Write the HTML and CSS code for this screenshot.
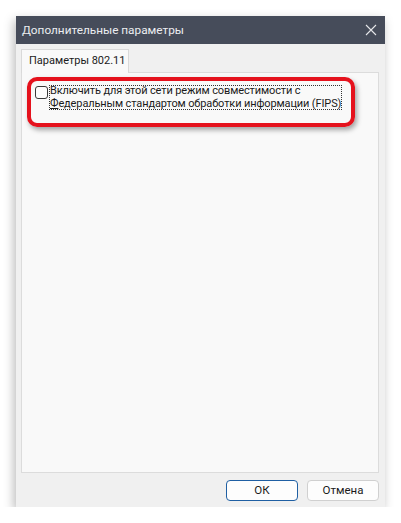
FILE: index.html
```html
<!DOCTYPE html>
<html lang="ru">
<head>
<meta charset="utf-8">
<link rel="stylesheet" href="styles.css">
</head>
<body>
<div class="window">
  <div class="titlebar">
    <span class="title">Дополнительные параметры</span>
    <svg class="close" width="12" height="12" viewBox="0 0 12 12"><path d="M1 1L11 11M11 1L1 11" stroke="#e6e7ea" stroke-width="1.1" fill="none"/></svg>
  </div>
  <div class="body">
    <div class="tabs"><div class="tab">Параметры 802.11</div></div>
    <div class="panel">
      <div class="highlight">
        <div class="row">
          <span class="check"></span>
          <span class="label">Включить для этой сети режим совместимости с<br><u>Ф</u>едеральным стандартом обработки информации (FIPS)</span>
        </div>
      </div>
    </div>
  </div>
  <div class="footer">
    <button class="btn primary">ОК</button>
    <button class="btn">Отмена</button>
  </div>
</div>
</body>
</html>
```
FILE: styles.css
```css
html, body { margin: 0; padding: 0; background: #ffffff; }
body { font-family: Roboto, "Noto Sans", sans-serif; font-size: 11px; color: #1b1b1b; }
.window {
  margin: 16px 0 0 16px;
  width: 369px;
  height: 491px;
  background: #f0f0f0;
  display: flex;
  flex-direction: column;
  box-shadow: -2px 4px 10px rgba(0,0,0,0.28);
}
.titlebar {
  height: 28px;
  background: #464c5a;
  display: flex;
  align-items: center;
  justify-content: space-between;
  padding: 0 8px 0 6px;
}
.title { color: #eceef1; font-size: 11.8px; }
.body { flex: 1; display: flex; flex-direction: column; padding: 5px 6px 0 5px; }
.tabs { display: flex; height: 23px; }
.tab {
  background: #f9f9f9;
  border: 1px solid #d9d9d9;
  border-bottom: none;
  width: 108px;
  padding-left: 7px;
  box-sizing: border-box;
  line-height: 22px;
  font-size: 11px;
  white-space: nowrap;
  position: relative;
  z-index: 1;
  margin-bottom: -1px;
}
.panel {
  flex: 1;
  background: #f9f9f9;
  border: 1px solid #dcdcdc;
  padding: 4px 0 0 5px;
}
.highlight {
  width: 316px;
  height: 38px;
  border: 4px solid #e5121d;
  border-radius: 10px;
  box-shadow: 2px 3px 5px rgba(0,0,0,0.35);
  padding: 4px 0 0 4px;
}
.row { display: flex; align-items: flex-start; }
.check {
  width: 11px; height: 11px;
  border: 1px solid #3a3a3a;
  border-radius: 3px;
  background: #fdfdfd;
  margin-top: 1px;
  flex: none;
}
.label {
  margin-left: 1px;
  outline: 1px dotted #333;
  outline-offset: -1px;
  padding: 0 2px 0 1px;
  font-size: 11px;
  letter-spacing: -0.12px;
  line-height: 12.5px;
  width: 290px;
  white-space: nowrap;
}
.footer {
  height: 34px;
  display: flex;
  justify-content: flex-end;
  align-items: center;
  gap: 9px;
  padding: 0 6px 0 0;
}
.btn {
  width: 72px;
  height: 21px;
  font-family: inherit;
  font-size: 11.5px;
  color: #1b1b1b;
  background: #fdfdfd;
  border: 1px solid #d0d0d0;
  border-radius: 4px;
  padding: 0;
}
.btn.primary { border: 1px solid #1f5fa3; }
```
